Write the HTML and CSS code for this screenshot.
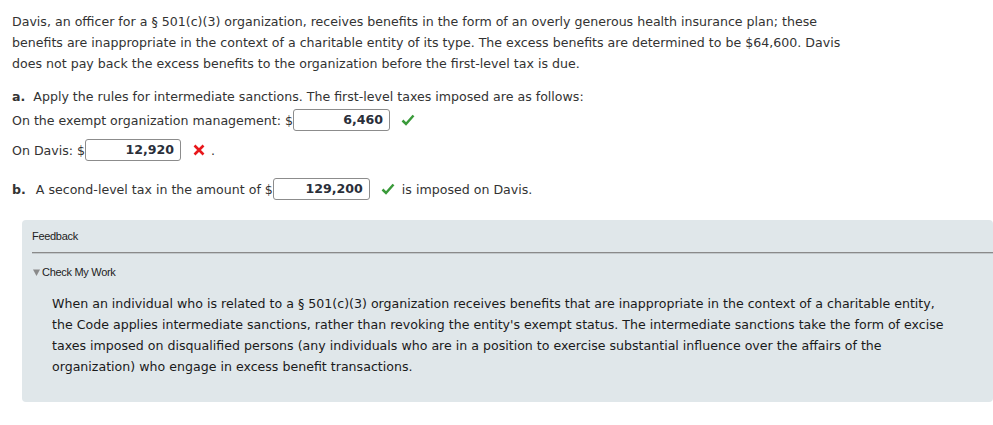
FILE: index.html
```html
<!DOCTYPE html>
<html>
<head>
<meta charset="utf-8">
<link rel="stylesheet" href="styles.css">
</head>
<body>
<div class="page">
  <p class="intro">Davis, an officer for a § 501(c)(3) organization, receives benefits in the form of an overly generous health insurance plan; these<br>benefits are inappropriate in the context of a charitable entity of its type. The excess benefits are determined to be $64,600. Davis<br>does not pay back the excess benefits to the organization before the first-level tax is due.</p>

  <div class="part part-a">
    <p class="prompt"><b>a.</b>&nbsp; Apply the rules for intermediate sanctions. The first-level taxes imposed are as follows:</p>
    <div class="row row-1">
      <span class="label">On the exempt organization management: $</span><span class="field">6,460</span>
      <svg class="mark check" width="14" height="14" viewBox="0 0 14 14"><path d="M1.5 7.5 L5 11 L12.5 2.5" fill="none" stroke="#3a9a3a" stroke-width="2.5"/></svg>
    </div>
    <div class="row row-2">
      <span class="label">On Davis: $</span><span class="field">12,920</span>
      <svg class="mark cross" width="12" height="12" viewBox="0 0 12 12"><path d="M1.5 1.5 L10.5 10.5 M10.5 1.5 L1.5 10.5" fill="none" stroke="#e8171b" stroke-width="2.6"/></svg>
      <span class="dot">.</span>
    </div>
  </div>

  <div class="row row-b">
    <b>b.</b><span class="label b-label">A second-level tax in the amount of $</span><span class="field">129,200</span>
    <svg class="mark check" width="14" height="14" viewBox="0 0 14 14"><path d="M1.5 7.5 L5 11 L12.5 2.5" fill="none" stroke="#3a9a3a" stroke-width="2.5"/></svg>
    <span class="after">is imposed on Davis.</span>
  </div>

  <div class="feedback">
    <div class="fb-title">Feedback</div>
    <div class="fb-toggle">
      <svg class="tri" width="7" height="7" viewBox="0 0 7 7"><path d="M0 0.5 L7 0.5 L3.5 7 Z" fill="#8a8a8a"/></svg><span>Check My Work</span>
    </div>
    <p class="fb-text">When an individual who is related to a § 501(c)(3) organization receives benefits that are inappropriate in the context of a charitable entity,<br>the Code applies intermediate sanctions, rather than revoking the entity's exempt status. The intermediate sanctions take the form of excise<br>taxes imposed on disqualified persons (any individuals who are in a position to exercise substantial influence over the affairs of the<br>organization) who engage in excess benefit transactions.</p>
  </div>
</div>
</body>
</html>
```

FILE: styles.css
```css
html, body {
  margin: 0;
  padding: 0;
  background: #ffffff;
}

.page {
  padding: 11px 0 0 12px;
  font-family: "DejaVu Sans", Verdana, sans-serif;
  font-size: 12.6px;
  color: #333333;
  line-height: 21px;
}

.intro {
  margin: 0;
}

.part-a {
  margin-top: 12px;
}

.prompt {
  margin: 0;
}

.row {
  display: flex;
  align-items: center;
  height: 22px;
  white-space: nowrap;
}

.row-1 {
  margin-top: 2px;
}

.row-2 {
  margin-top: 8px;
}

.row-b {
  margin-top: 17px;
}

.b-label {
  margin-left: 10px;
}

.field {
  display: inline-block;
  box-sizing: border-box;
  width: 97px;
  height: 22px;
  line-height: 20px;
  border: 1px solid #8c8c8c;
  border-radius: 3px;
  text-align: right;
  padding-right: 6px;
  font-weight: bold;
  color: #2a2f3a;
  background: #fff;
}

.row-2 .field {
  width: 96px;
}

.mark {
  margin-left: 11px;
}

.cross {
  margin-left: 12px;
}

.dot {
  margin-left: 6px;
}

.after {
  margin-left: 7px;
}

.feedback {
  margin-top: 20px;
  margin-left: 10px;
  width: 971px;
  box-sizing: border-box;
  background: #e0e7ea;
  border-radius: 4px;
  padding: 9px 0 25px 10px;
}

.fb-title {
  font-family: "Liberation Sans", Arial, sans-serif;
  font-size: 11px;
  letter-spacing: -0.3px;
  line-height: 14px;
  color: #222;
  padding-bottom: 9px;
  border-bottom: 1px solid #8a8a8a;
  box-shadow: 0 1px 0 #c2c8cb;
}

.fb-toggle {
  display: flex;
  align-items: center;
  margin-top: 12px;
  font-family: "Liberation Sans", Arial, sans-serif;
  font-size: 11px;
  letter-spacing: -0.3px;
  line-height: 14px;
  color: #222;
}

.tri {
  margin-left: 1px;
  margin-right: 2px;
}

.fb-text {
  margin: 14px 0 0 20px;
  color: #1a1a1a;
}
```
